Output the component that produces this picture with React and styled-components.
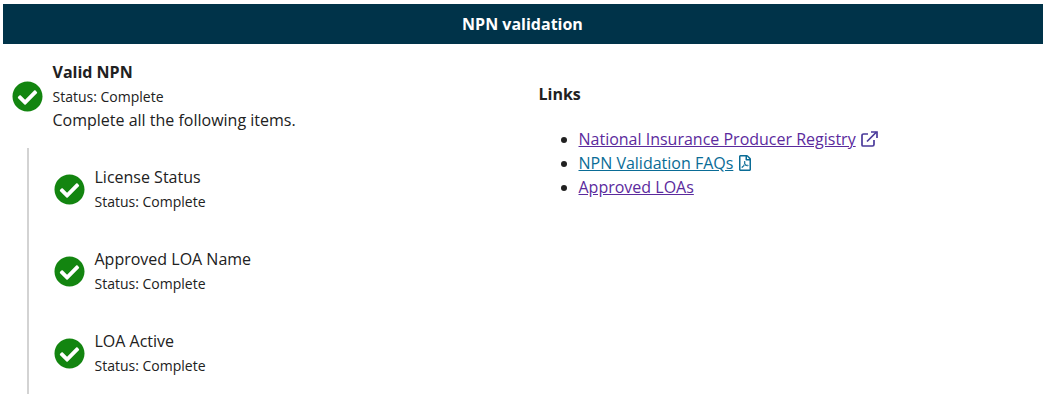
import React from "react";
import styled, { createGlobalStyle } from "styled-components";
import { FaCheckCircle, FaRegFilePdf } from "react-icons/fa";

const Global = createGlobalStyle`
  html, body {
    margin: 0;
    background: #fff;
    font-family: "Open Sans", "Liberation Sans", sans-serif;
    color: #212121;
  }
`;

const Page = styled.div`
  padding: 4px 6px 0 3px;
`;

const Header = styled.h1`
  margin: 0;
  padding-right: 1px;
  height: 40px;
  line-height: 40px;
  background: #003349;
  color: #fff;
  font-size: 16px;
  font-weight: 700;
  text-align: center;
`;

const Columns = styled.div`
  display: grid;
  grid-template-columns: 532.5px 1fr;
`;

const LeftColumn = styled.div`
  padding: 16px 0 0 9px;
`;

const Item = styled.div`
  display: flex;
  align-items: center;
  gap: 9.5px;
`;

const Check = styled(FaCheckCircle)`
  flex: none;
  width: 31px;
  height: 31px;
  color: #138510;
`;

const Title = styled.div`
  font-size: 16px;
  line-height: 24px;
  font-weight: ${(p) => (p.$bold ? 700 : 400)};
`;

const Status = styled.div`
  height: 24px;
  font-size: 14px;
  line-height: 26px;
`;

const SubList = styled.div`
  margin: 16px 0 0 15px;
  padding: 17px 0 17px 25px;
  border-left: 2px solid #d3d3d3;
  display: flex;
  flex-direction: column;
  gap: 34px;
  width: 300px;
`;

const RightColumn = styled.div`
  padding: 38px 0 0 3px;
`;

const LinksTitle = styled.div`
  font-size: 16px;
  line-height: 24px;
  font-weight: 700;
`;

const LinkList = styled.ul`
  margin: 21px 0 0;
  padding: 0 0 0 40px;
  font-size: 16px;
  line-height: 24px;
`;

const LinkAnchor = styled.a`
  color: ${(p) => p.$color};
`;

const LinkIcon = styled.span`
  display: inline-block;
  height: 16px;
  line-height: 16px;
  margin-left: ${(p) => p.$gap}px;
  color: ${(p) => p.$color};
  vertical-align: -2px;
  & svg {
    display: block;
    width: auto;
    height: 16px;
  }
`;

const ExternalIcon = () => (
  <svg viewBox="0 0 17 16" fill="none" stroke="currentColor" strokeWidth="1.7">
    <path d="M7 3H2.6A1.6 1.6 0 0 0 1 4.6v9.4a1 1 0 0 0 1 1h9.4a1.6 1.6 0 0 0 1.6-1.6V9" />
    <path d="M6 10.5 15.5 1" />
    <path d="M10 1h6v6" />
  </svg>
);

const subItems = ["License Status", "Approved LOA Name", "LOA Active"];

export default function App() {
  return (
    <Page>
      <Global />
      <Header>NPN validation</Header>
      <Columns>
        <LeftColumn>
          <Item>
            <Check />
            <div>
              <Title $bold>Valid NPN</Title>
              <Status>Status: Complete</Status>
              <Title>Complete all the following items.</Title>
            </div>
          </Item>
          <SubList>
            {subItems.map((name) => (
              <Item key={name}>
                <Check />
                <div>
                  <Title>{name}</Title>
                  <Status>Status: Complete</Status>
                </div>
              </Item>
            ))}
          </SubList>
        </LeftColumn>
        <RightColumn>
          <LinksTitle>Links</LinksTitle>
          <LinkList>
            <li>
              <LinkAnchor href="#" $color="#5b2a9d">National Insurance Producer Registry</LinkAnchor>
              <LinkIcon $color="#4a3a9a" $gap={5}><ExternalIcon /></LinkIcon>
            </li>
            <li>
              <LinkAnchor href="#" $color="#0a6c96">NPN Validation FAQs</LinkAnchor>
              <LinkIcon $color="#0a6c96" $gap={3.5}><FaRegFilePdf /></LinkIcon>
            </li>
            <li>
              <LinkAnchor href="#" $color="#5b2a9d">Approved LOAs</LinkAnchor>
            </li>
          </LinkList>
        </RightColumn>
      </Columns>
    </Page>
  );
}
